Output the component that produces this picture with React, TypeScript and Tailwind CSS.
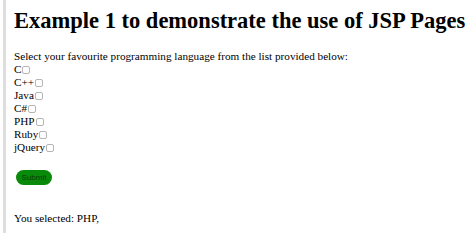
import { useState } from "react";

const languages = ["C", "C++", "Java", "C#", "PHP", "Ruby", "jQuery"];

export default function App() {
  const [checked, setChecked] = useState<string[]>([]);

  const toggle = (lang: string) => {
    setChecked((prev) =>
      prev.includes(lang) ? prev.filter((l) => l !== lang) : [...prev, lang]
    );
  };

  return (
    <div className="w-[474px] h-[239px] bg-white pl-[3px] font-['Liberation_Serif',serif] text-black">
      <div className="h-[233px] border-l-[3px] border-[#dedede] pl-[8px]">
        {/* Heading */}
        <h1 className="pt-[7px] text-[22.5px] leading-[28px] font-bold whitespace-nowrap">
          Example 1 to demonstrate the use of JSP Pages
        </h1>

        <form className="mt-[15px] text-[11.2px] leading-[13px]">
          <p>Select your favourite programming language from the list provided below:</p>
          {languages.map((lang) => (
            <div key={lang} className="flex items-center">
              {lang}
              <input
                type="checkbox"
                checked={checked.includes(lang)}
                onChange={() => toggle(lang)}
                className="ml-[1px] w-[8px] h-[8px] appearance-none rounded-[2px] border border-[#b5b5b5] bg-white"
              />
            </div>
          ))}

          <button
            type="button"
            className="mt-[16px] ml-[2px] h-[15px] w-[36px] rounded-full bg-[#0a8a0a] text-[8px] leading-[15px] text-[#073d07] font-['Liberation_Sans',sans-serif]"
          >
            Submit
          </button>
        </form>

        <p className="mt-[26px] text-[11.2px] leading-[14px]">You selected: PHP,</p>
      </div>
    </div>
  );
}
